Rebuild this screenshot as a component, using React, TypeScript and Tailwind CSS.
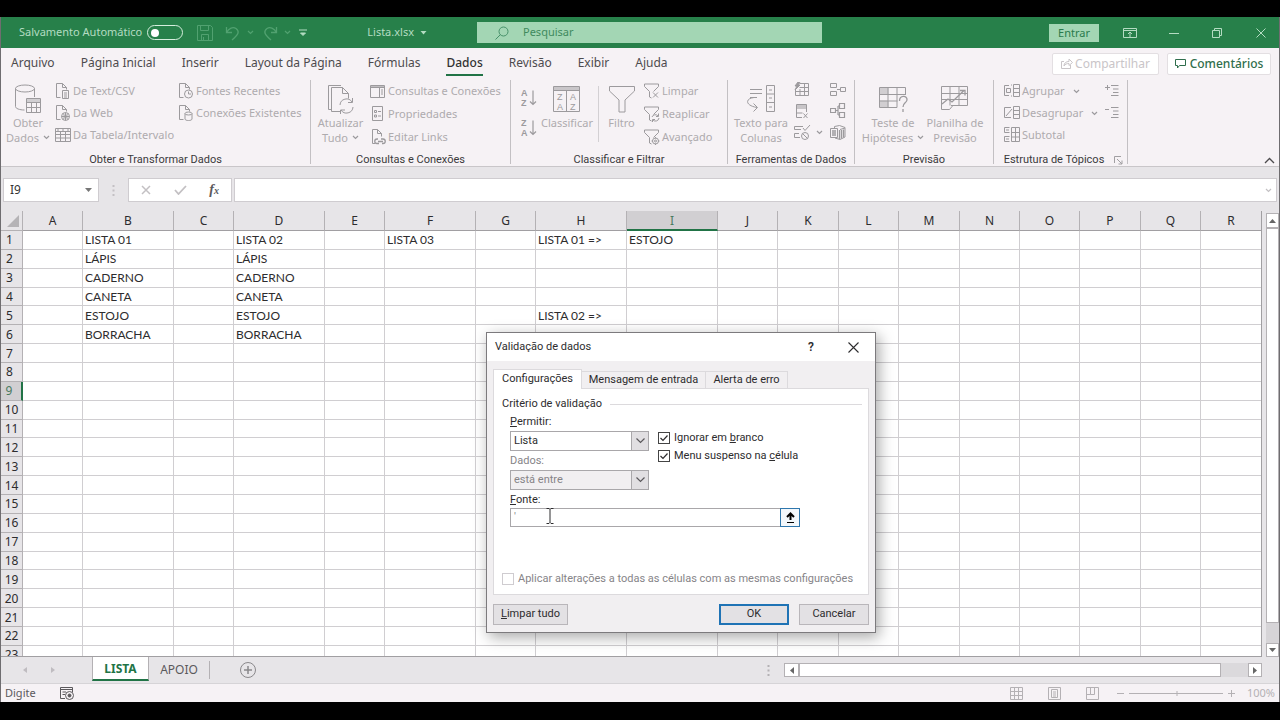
import { type ReactNode } from "react";

const COLS: [string, number][] = [
  ["A", 60], ["B", 91], ["C", 60], ["D", 91], ["E", 60], ["F", 91], ["G", 60], ["H", 91], ["I", 91],
  ["J", 60], ["K", 61], ["L", 60], ["M", 61], ["N", 60], ["O", 60], ["P", 61], ["Q", 60], ["R", 61],
];

const CELLS: Record<string, string> = {
  B1: "LISTA 01", B2: "LÁPIS", B3: "CADERNO", B4: "CANETA", B5: "ESTOJO", B6: "BORRACHA",
  D1: "LISTA 02", D2: "LÁPIS", D3: "CADERNO", D4: "CANETA", D5: "ESTOJO", D6: "BORRACHA",
  F1: "LISTA 03", H1: "LISTA 01 =>", I1: "ESTOJO", H5: "LISTA 02 =>",
};

const ROWS = Array.from({ length: 23 }, (_, i) => i + 1);
const MENU = ["Arquivo", "Página Inicial", "Inserir", "Layout da Página", "Fórmulas", "Dados", "Revisão", "Exibir", "Ajuda"];

function Ico({ w, h, children, className = "" }: { w: number; h: number; children: ReactNode; className?: string }) {
  return (
    <svg width={w} height={h} viewBox={`0 0 ${w} ${h}`} fill="none" stroke="currentColor" strokeWidth="1"
      className={"shrink-0 " + className} aria-hidden="true">{children}</svg>
  );
}

const Chev = ({ className = "" }: { className?: string }) => (
  <Ico w={7} h={5} className={className}><path d="M1 1l2.500 2.500L6 1" strokeWidth="1.200" /></Ico>
);

const Doc = ({ children }: { children?: ReactNode }) => (
  <Ico w={16} h={16}><path d="M5.500 14.500h-4V.5h6l4 4v2M7.500.5v4h4" />{children}</Ico>
);

const Funnel = ({ children }: { children?: ReactNode }) => (
  <Ico w={16} h={16}><path d="M.5 1h14v2.500l-5 5M.5 1v2.500l5 5V14l2 1" />{children}</Ico>
);

function Big({ icon, lines, drop, className = "" }: { icon: ReactNode; lines: string[]; drop?: boolean; className?: string }) {
  return (
    <button className={"flex flex-col items-center pt-[3px] text-[11px] leading-[15px] shrink-0 whitespace-nowrap " + className}>
      <span className="h-8 flex items-center">{icon}</span>
      {lines.map((l, i) => (
        <span key={l} className="flex items-center gap-1">{l}{drop && i === lines.length - 1 && <Chev />}</span>
      ))}
    </button>
  );
}

function Small({ icon, label, drop }: { icon: ReactNode; label: string; drop?: boolean }) {
  return (
    <button className="flex items-center gap-0.5 h-[22px] text-[11px] whitespace-nowrap">
      {icon}{label}{drop && <Chev className="ml-1.5" />}
    </button>
  );
}

function Group({ title, children, className = "", launcher }: { title: string; children: ReactNode; className?: string; launcher?: boolean }) {
  return (
    <section className={"flex flex-col justify-between border-r border-[#c3c0c3] shrink-0 " + className}>
      <div className="flex text-[#aeabae] [&_svg]:text-[#9c9a9d]">{children}</div>
      <div className="flex h-4 -mb-1 items-center font-[Roboto,sans-serif] text-[11px] text-[#3b3a3c] whitespace-nowrap">
        <h2 className="flex-1 text-center">{title}</h2>
        {launcher && (
          <button aria-label="Mais opções" className="mr-1 text-[#a19fa2]">
            <Ico w={9} h={9}><path d="M.5 7V.5H7M3 3l5 5M8 4.500V8H4.500" /></Ico>
          </button>
        )}
      </div>
    </section>
  );
}

const sortIco = (a: string, b: string) => (
  <Ico w={16} h={20}>
    <g fontSize="9" fontFamily="Liberation Sans" fontWeight="700" fill="currentColor" stroke="none">
      <text x="0" y="8">{a}</text><text x="0" y="18">{b}</text>
    </g>
    <path d="M12 2.500v14M9 13.500l3 3 3-3" strokeWidth="1.200" />
  </Ico>
);

function TitleBar() {
  return (
    <header className="flex items-center h-[31px] shrink-0 bg-[#27804a] text-[#b4dcc2] text-[11px]">
      <div className="flex items-center w-[476px] shrink-0 pl-[18px]">
        <span id="autosave">Salvamento Automático</span>
        <button role="switch" aria-checked="false" aria-labelledby="autosave"
          className="ml-[5px] w-9 h-[15px] rounded-full border border-[#d5eedd] flex items-center pl-[3px]">
          <span className="w-2 h-2 rounded-full bg-white" />
        </button>
        <div className="flex items-center ml-3.5 text-[#51a170]">
          <button aria-label="Salvar">
            <Ico w={16} h={16}><path d="M.5.5h13l2 2v13H.5zM3.500.5v5h8v-5M4.500 15.500v-6h7v6M6.500 12v3.500" /></Ico>
          </button>
          <button aria-label="Desfazer" className="flex items-center gap-1.5 ml-3">
            <Ico w={16} h={16}><path d="M1.500 2v5.500H7M1.500 7.500C4 3 8 1.500 11 3.500c4 3 2.500 6-4 11.500" strokeWidth="1.300" /></Ico><Chev />
          </button>
          <button aria-label="Refazer" className="flex items-center gap-1.5 ml-2">
            <Ico w={16} h={16}><path d="M14.500 2v5.500H9M14.500 7.500C12 3 8 1.500 5 3.500c-4 3-2.500 6 4 11.500" strokeWidth="1.300" /></Ico><Chev />
          </button>
          <button aria-label="Personalizar" className="ml-2 text-[#b4dcc2]">
            <Ico w={8} h={8}><path d="M0 1h8" /><path d="M1.500 4h5L4 6.500z" fill="currentColor" /></Ico>
          </button>
        </div>
        <button className="flex items-center gap-1.5 ml-auto mr-[50px]">
          Lista.xlsx
          <Ico w={7} h={4}><path d="M.5 0h6l-3 3.500z" fill="currentColor" stroke="none" /></Ico>
        </button>
      </div>
      <label className="flex items-center w-[345px] h-[21px] bg-[#a3d6b4] text-[#47916a] pl-[18px] gap-[14px]">
        <Ico w={14} h={14}><circle cx="8.500" cy="5.500" r="4.500" /><path d="M5.500 8.500L.5 13.500" /></Ico>
        <input aria-label="Pesquisar" placeholder="Pesquisar"
          className="flex-1 min-w-0 bg-transparent outline-none placeholder:text-[#3f8a5e]" />
      </label>
      <div className="flex items-center ml-auto mr-[13px]">
        <button className="w-[50px] h-[18px] bg-[#a3d6b4] text-[#2a7a4c] leading-[18px]">Entrar</button>
        <button aria-label="Opções da faixa" className="ml-6">
          <Ico w={14} h={10}><path d="M.5.5h13v9H.5zM.5 2.500h13M7 9V4.500M5 6l2-2 2 2" /></Ico>
        </button>
        <button aria-label="Minimizar" className="ml-8"><Ico w={10} h={10}><path d="M0 5.500h10" /></Ico></button>
        <button aria-label="Restaurar" className="ml-[33px]">
          <Ico w={11} h={10}><path d="M.5 2.500h7v7h-7zM2.500 2V.5h7v7H8" /></Ico>
        </button>
        <button aria-label="Fechar" className="ml-[33px]"><Ico w={10} h={10}><path d="M.5.5l9 9M9.500.5l-9 9" /></Ico></button>
      </div>
    </header>
  );
}

function Menu() {
  return (
    <nav className="flex items-center h-[31px] shrink-0 bg-[#f6f2f5] pl-2.5 text-[12px] text-[#4d4b4e]">
      <div className="flex gap-[26px]">
        {MENU.map((m) => (
          <button key={m} className={"h-[24px] leading-[20px] whitespace-nowrap border-b-2 " +
            (m === "Dados" ? "border-[#217346] font-medium text-[#333]" : "border-transparent")}>{m}</button>
        ))}
      </div>
      <div className="flex gap-2 ml-auto mr-2 text-[12px]">
        <button disabled className="flex items-center justify-center gap-0.5 w-[107px] h-[22px] bg-white border border-[#e3dfe2] rounded-xs text-[#c9c5c8]">
          <Ico w={12} h={11}><path d="M3 3.500H.5v7h9V7M3 8c0-3 2-4.500 5-4.500V1l3.500 3.500L8 7.500V5.500C6 5.500 4 6 3 8z" /></Ico>
          Compartilhar
        </button>
        <button className="flex items-center justify-center gap-1 w-[104px] h-[22px] bg-white border border-[#e3dfe2] rounded-xs text-[#2f6e4c] font-medium">
          <Ico w={11} h={10}><path d="M.5.5h10v6h-6L2.500 9V6.500h-2z" /></Ico>
          Comentários
        </button>
      </div>
    </nav>
  );
}

function Ribbon() {
  return (
    <div className="flex h-[88px] shrink-0 bg-[#f6f2f5] border-b border-[#c9c6c9] pt-px pb-0.5">
      <Group title="Obter e Transformar Dados" className="w-[310px]">
        <Big className="w-[54px]" drop lines={["Obter", "Dados"]} icon={
          <Ico w={28} h={31}>
            <ellipse cx="11" cy="4.500" rx="9.500" ry="3.500" />
            <path d="M1.500 4.500v18c0 2 4 3.500 9 3.500M20.500 4.500V13" />
            <path d="M12.500 14.500h14v14h-14zM12.500 18.500h14M12.500 23.500h14M17.500 18v10.500M22.500 18v10.500" />
            <path d="M12.500 16.500h14" opacity=".4" strokeWidth="3" />
          </Ico>} />
        <div className="w-[123px]">
          <Small label="De Text/CSV" icon={<Doc><path d="M7.500 7.500h6v8h-6zM9 10h3M9 12h3M9 14h3" /></Doc>} />
          <Small label="Da Web" icon={<Doc><circle cx="10.500" cy="11.500" r="4" /><path d="M6.500 11.500h8M10.500 7.500v8M8.500 8.500c1 2 1 4 0 6M12.500 8.500c-1 2-1 4 0 6" /></Doc>} />
          <Small label="Da Tabela/Intervalo" icon={<Ico w={16} h={16}><path d="M.5 1.500h15v13H.5zM.5 4.500h15M.5 7.500h15M.5 11h15M5.500 4.500v10M10.500 4.500v10" /><path d="M2 3h2M7 3h2M12 3h2" /></Ico>} />
        </div>
        <div>
          <Small label="Fontes Recentes" icon={<Doc><circle cx="10.500" cy="11" r="4" /><path d="M10.500 8.500V11h2.500" /></Doc>} />
          <Small label="Conexões Existentes" icon={<Doc><ellipse cx="10.500" cy="8.500" rx="3.500" ry="1.500" /><path d="M7 8.500v5.500c0 2 7 2 7 0V8.500" /></Doc>} />
        </div>
      </Group>

      <Group title="Consultas e Conexões" className="w-[200px]">
        <Big className="w-[59px]" drop lines={["Atualizar", "Tudo"]} icon={
          <Ico w={28} h={30}>
            <path d="M4 25.500H1.500V1.500H14M13 27.500H4.500v-24h11l6 6v5M15.500 3.500v6h6" />
            <path d="M13 21a6.500 6.500 0 0 1 12-3M26 23a6.500 6.500 0 0 1-12 3M25.500 14v4.500H21M13.500 30v-4H18" />
          </Ico>} />
        <div className="flex flex-col gap-px">
          <Small label="Consultas e Conexões" icon={<Ico w={16} h={14}><path d="M.5 1.500h14v12H.5zM.5 3.500h14M9.500 4v9.500M11 6h2M11 8h2M11 10h2" /><path d="M.5 2.500h14" opacity=".6" /></Ico>} />
          <Small label="Propriedades" icon={<Ico w={16} h={16}><path d="M2.500.5h10v14h-10zM8 5.500h3M8 10h3M4.500 4.500h2v2h-2zM4.500 9h2v2h-2z" /></Ico>} />
          <Small label="Editar Links" icon={<Ico w={16} h={16}><path d="M5 14.500H2.500V.5h5l4 4v3M7.500.5v4h4" /><path d="M8 10H7a2 2 0 0 0 0 4.500h2M11 10h2a2 2 0 0 1 0 4.500h-1M8 12.500h5" strokeWidth="1.300" /></Ico>} />
        </div>
      </Group>

      <Group title="Classificar e Filtrar" className="w-[217px]">
        <div className="flex flex-col gap-2.5 pt-2 pl-[10px] w-[28px]">
          <button aria-label="Classificar de A a Z">{sortIco("A", "Z")}</button>
          <button aria-label="Classificar de Z a A">{sortIco("Z", "A")}</button>
        </div>
        <Big className="w-[56px]" lines={["Classificar"]} icon={
          <Ico w={28} h={28}>
            <path d="M.5 1.500h26v25H.5zM.5 5.500h26M13.500 5.500v21" />
            <path d="M.5 3.500h26" strokeWidth="3" opacity=".5" />
            <g fontSize="9" fontFamily="Liberation Sans" fill="currentColor" stroke="none">
              <text x="4" y="15">Z</text><text x="4" y="25">A</text><text x="17" y="15">A</text><text x="17" y="25">Z</text>
            </g>
          </Ico>} />
        <div className="w-px h-14 mt-1.5 ml-[3px] bg-[#d3d0d3]" />
        <Big className="w-[45px]" lines={["Filtro"]} icon={
          <Ico w={26} h={28}><path d="M.5 1.500h25V6l-9.500 9v12h-6V15L.5 6z" /></Ico>} />
        <div className="flex flex-col gap-px">
          <Small label="Limpar" icon={<Funnel><path d="M9 9.500l5 5M14 9.500l-5 5" /></Funnel>} />
          <Small label="Reaplicar" icon={<Funnel><path d="M8 11a3.500 3.500 0 0 1 6-1M15 12a3.500 3.500 0 0 1-6 2M14.500 7.500v3H12M8.500 16v-2.500H11" /></Funnel>} />
          <Small label="Avançado" icon={<Funnel><circle cx="11.500" cy="12" r="3" /><circle cx="11.500" cy="12" r="1" /><path d="M11.500 8v1.500M11.500 14.500V16M7.500 12H9M14 12h1.500" /></Funnel>} />
        </div>
      </Group>

      <Group title="Ferramentas de Dados" className="w-[127px]">
        <Big className="w-[66px]" lines={["Texto para", "Colunas"]} icon={
          <Ico w={30} h={30}>
            <path d="M4 5.500h12M4 9.500h12M4 13.500h7M8 13.500c-9 1-9 8 3 10M7.500 19.500l4 4-4 4" />
            <path d="M20.500 1.500h8v26h-8zM20.500 10h8M20.500 18.500h8M23 6h3M23 14h3M23 23h3" />
          </Ico>} />
        <div className="flex flex-col gap-1.5 pt-0.5 w-9">
          <button aria-label="Preenchimento Relâmpago"><Ico w={16} h={15}><path d="M5.500 1.500h9v12h-13V7M1.500 9.500h13M5.500 5.500h9M6 7v6.500M10.500 1.500v12" /><path d="M4 0L1 4h2L1 8l5-5H4l2-3" fill="currentColor" /></Ico></button>
          <button aria-label="Remover Duplicatas"><Ico w={16} h={16}><path d="M8 14.500H2.500V1.500h10V9M2.500 10h6" /><path d="M3 2h9v3.500H3z" fill="currentColor" opacity=".5" /><path d="M9.500 10.500l4 4.500M13.500 10.500l-4 4.500" /></Ico></button>
          <button aria-label="Validação de Dados" className="flex items-center gap-1"><Ico w={18} h={15}><path d="M7 4.500H.5v-3H9M6 12.500H.5v-4H5M9 3l2 2.500L16 0" /><circle cx="11" cy="11" r="3.500" /><path d="M8.500 8.500l5 5" /></Ico><Chev /></button>
        </div>
        <div className="flex flex-col gap-1.5 pt-0.5">
          <button aria-label="Consolidar"><Ico w={16} h={15}><path d="M.5 1.500h6v4h-6zM.5 9.500h6v4h-6zM10.500 5.500h5v4h-5zM7 7.500h3" /></Ico></button>
          <button aria-label="Relações"><Ico w={16} h={16}><path d="M.5 5.500h5v4h-5zM9.500.500h5v5h-5zM9.500 9.500h5v5h-5zM5.500 7.500H8M8 3v9M8 3h1.500M8 12h1.500" strokeWidth="1.200" /></Ico></button>
          <button aria-label="Modelo de Dados">
            <Ico w={16} h={15}>
              <path d="M4.500 3v-1.500l5-1 5.500 2v9.500l-5 2.500-5-1.500M15 3l-5 1.500" />
              <path d="M.5 3.500h7v9h-7z" />
              <path d="M2 6h4M2 8h4M2 10h4M9.500 5v9M11.500 5v8.500M13.500 4.500v8" strokeWidth="1.300" />
            </Ico>
          </button>
        </div>
      </Group>

      <Group title="Previsão" className="w-[139px]">
        <Big className="w-[76px]" drop lines={["Teste de", "Hipóteses"]} icon={
          <Ico w={29} h={28}>
            <path d="M18 22.500H.5v-20h26V10M.5 9.500h26M.5 16h18M9 2.500v20M18 2.500v20" />
            <path d="M1 3h8v6.500H1zM1 16h8v6.500H1z" fill="currentColor" opacity=".4" />
            <path d="M20.500 16c0-6 8-6 7.500-1-.5 3-4 3-4 7M24 24v3" strokeWidth="1.300" />
          </Ico>} />
        <Big className="w-[56px] -ml-1" lines={["Planilha de", "Previsão"]} icon={
          <Ico w={28} h={26}>
            <path d="M10 19.500h16.500V.5H.5v23h8l3-3.500M.5 7.500h26M.5 13.500h26M9 .5v19M18 .5v19" />
            <path d="M1 18l6-5 4 3L23 4.500M19 4.500h5v5" strokeWidth="1.300" />
          </Ico>} />
      </Group>

      <Group title="Estrutura de Tópicos" className="w-[134px]" launcher>
        <div className="pl-2.5 w-[111px]">
          <Small drop label="Agrupar" icon={<Ico w={16} h={14}><path d="M5 1.500H.5v10H5M9.500.5h6v12h-6zM9.500 4.500h6M9.500 8.500h6M2.500 4.500h4v4h-4zM7 1h1M7 12h1" /></Ico>} />
          <Small drop label="Desagrupar" icon={<Ico w={16} h={14}><path d="M7 1.500H.5v10H7M9.500.5h6v12h-6zM9.500 4.500h6M9.500 8.500h6M2 10l6-7" /></Ico>} />
          <Small label="Subtotal" icon={<Ico w={16} h={16}><path d="M5.500.5h-5v5h5M5.500 9.500h-5v5h5M2 3h3M2 12h3M7.500.5h8v14h-8zM7.500 5.500h8M7.500 10h8M11.500.5v14" /></Ico>} />
        </div>
        <div className="pt-1 flex flex-col gap-2.5">
          <button aria-label="Mostrar Detalhe"><Ico w={14} h={12}><path d="M0 3.500h5M2.500 1v5M6 1.500h7.500M8 5h5.500M8 8.500h5.500M6 11.500h7.500" /></Ico></button>
          <button aria-label="Ocultar Detalhe"><Ico w={14} h={12}><path d="M0 3.500h4M6 1.500h7.500M8 5h5.500M8 8.500h5.500M6 11.500h7.500" /></Ico></button>
        </div>
      </Group>
      <button aria-label="Recolher a faixa" className="ml-auto self-end mr-1 text-[#4d4b4e]">
        <Ico w={11} h={7}><path d="M1 6l4.500-4.500L10 6" strokeWidth="1.300" /></Ico>
      </button>
    </div>
  );
}

function FormulaBar() {
  return (
    <div className="flex items-center h-11 shrink-0 bg-[#e7e5e8] pt-0.5 px-0.5 text-[#c3c0c3]">
      <label className="flex items-center w-24 h-6 bg-white border border-[#cfccd0] pr-1.5">
        <input aria-label="Caixa de nome" defaultValue="I9" className="w-full min-w-0 pl-1.5 text-[12px] text-[#333] outline-none" />
        <Ico w={7} h={4}><path d="M0 0h7L3.500 4z" fill="#777" stroke="none" /></Ico>
      </label>
      <Ico w={3} h={11} className="mx-[13px]"><path d="M1.500 0v2M1.500 4.500v2M1.500 9v2" strokeWidth="2" /></Ico>
      <div className="flex items-center justify-between w-[104px] h-6 bg-white border border-[#cfccd0] px-3">
        <button aria-label="Cancelar entrada"><Ico w={10} h={10}><path d="M1 1l8 8M9 1L1 9" strokeWidth="1.500" /></Ico></button>
        <button aria-label="Confirmar entrada"><Ico w={13} h={10}><path d="M1 5l3.500 4L12 1" strokeWidth="1.800" /></Ico></button>
        <button aria-label="Inserir função" className="font-['Liberation_Serif'] italic font-bold text-[14px] leading-4 text-[#5b595c]">f<sub className="text-[10px] bottom-0">x</sub></button>
      </div>
      <label className="flex items-center flex-1 h-6 ml-0.5 bg-white border border-[#cfccd0] pr-1">
        <input aria-label="Barra de fórmulas" className="flex-1 min-w-0 outline-none" />
        <Chev />
      </label>
    </div>
  );
}

function Sheet() {
  return (
    <div className="flex flex-1 min-h-0 bg-[#e7e5e8]">
      <div className="flex-1 min-w-0 overflow-hidden border-r border-b border-[#a19fa2]">
        <table className="table-fixed w-full h-[454px] border-separate border-spacing-0 text-[12px] leading-[17px] text-[#2d2c2e]">
          <colgroup>
            <col style={{ width: 22 }} />
            {COLS.map(([c, w]) => <col key={c} style={{ width: w }} />)}
          </colgroup>
          <thead>
            <tr className="h-5 bg-[#e7e5e8]">
              <th className="p-0 border-r border-b border-[#b4b1b4]">
                <Ico w={12} h={12} className="ml-1.5"><path d="M12 0v12H0z" fill="#b5b3b6" stroke="none" /></Ico>
              </th>
              {COLS.map(([c]) => (
                <th key={c} className={"p-0 font-normal border-r border-[#b4b1b4] " +
                  (c === "I" ? "bg-[#d1cfd2] border-b-2 border-b-[#217346] text-[#4a7a60]" : "border-b border-b-[#a19fa2]")}>{c}</th>
              ))}
            </tr>
          </thead>
          <tbody>
            {ROWS.map((r) => (
              <tr key={r}>
                <th className={"p-0 font-normal border-b border-[#b4b1b4] " +
                  (r === 9 ? "bg-[#d1cfd2] border-r-2 border-r-[#217346] text-[#4a7a60]" : "bg-[#e7e5e8] border-r") +
                  (r < 10 ? " pr-1" : "")}>{r}</th>
                {COLS.map(([c]) => (
                  <td key={c} className="p-0 pl-0.5 border-r border-b border-[#d0ced1] bg-white whitespace-nowrap font-[Lato,sans-serif]">
                    {CELLS[c + r]}
                  </td>
                ))}
              </tr>
            ))}
          </tbody>
        </table>
      </div>
      <div className="flex flex-col w-[13px] ml-1 mt-0.5 bg-[#d6d4d7] text-[#666]">
        <button aria-label="Rolar para cima" className="h-[15px] bg-white border border-[#b4b1b4] flex items-center justify-center">
          <Ico w={7} h={4}><path d="M0 4h7L3.500 0z" fill="currentColor" stroke="none" /></Ico>
        </button>
        <div className="flex-1 bg-white border border-[#b4b1b4]" />
        <button aria-label="Rolar para baixo" className="mt-5 h-[14px] bg-white border border-[#b4b1b4] flex items-center justify-center">
          <Ico w={7} h={4}><path d="M0 0h7L3.500 4z" fill="currentColor" stroke="none" /></Ico>
        </button>
      </div>
    </div>
  );
}

function SheetTabs() {
  return (
    <div className="flex h-[26px] shrink-0 bg-[#e7e5e8] text-[12px] text-[#5b595c]">
      <div className="flex items-center gap-[22px] w-[91px] pl-[22px] text-[#bfbcc0]">
        <button aria-label="Planilha anterior"><Ico w={5} h={6}><path d="M4 0v6L0 3z" fill="currentColor" stroke="none" /></Ico></button>
        <button aria-label="Próxima planilha"><Ico w={5} h={6}><path d="M1 0v6l4-3z" fill="currentColor" stroke="none" /></Ico></button>
      </div>
      <button className="w-[57px] h-6 pt-0.5 bg-white border-x border-x-[#b4b1b4] border-b-2 border-b-[#217346] font-bold text-[#217346]">LISTA</button>
      <button className="w-[60px] h-6 pt-px">APOIO</button>
      <div className="w-px h-[18px] mt-1 bg-[#b4b1b4]" />
      <button aria-label="Nova planilha" className="ml-[30px] text-[#8a888b]">
        <Ico w={16} h={16}><circle cx="8" cy="8" r="7.500" /><path d="M4 8h8M8 4v8" strokeWidth="1.500" /></Ico>
      </button>
      <div className="flex items-center ml-auto mr-[17px] text-[#666]">
        <Ico w={3} h={11} className="mr-3.5 text-[#b4b1b4]"><path d="M1.500 0v2M1.500 4.500v2M1.500 9v2" strokeWidth="2" /></Ico>
        <button aria-label="Rolar para a esquerda" className="w-[15px] h-[14px] bg-white border border-[#b4b1b4] flex items-center justify-center">
          <Ico w={4} h={7}><path d="M4 0v7L0 3.500z" fill="currentColor" stroke="none" /></Ico>
        </button>
        <div className="flex w-[449px] h-[14px] bg-[#dbd9dc]"><div className="w-[422px] bg-white border border-[#b4b1b4]" /></div>
        <button aria-label="Rolar para a direita" className="w-[14px] h-[14px] bg-white border border-[#b4b1b4] flex items-center justify-center">
          <Ico w={4} h={7}><path d="M0 0v7l4-3.500z" fill="currentColor" stroke="none" /></Ico>
        </button>
      </div>
    </div>
  );
}

function StatusBar() {
  return (
    <footer className="flex items-center h-[19px] shrink-0 bg-[#f6f2f5] border-t border-[#d6d4d7] pl-1 pr-1 text-[11px] text-[#5b595c]">
      Digite
      <Ico w={14} h={13} className="ml-6"><path d="M5 11.500H.5v-11h12V5M.5 2.500h12M2.500 5H6M2.500 7.500H5" /><circle cx="9.500" cy="8.500" r="4" /><circle cx="9.500" cy="8.500" r="1.500" fill="currentColor" /></Ico>
      <div className="flex items-center ml-auto text-[#b4b1b4]">
        <button aria-label="Normal"><Ico w={13} h={13}><path d="M.5.5h12v12H.5zM.5 4.500h12M.5 8.500h12M4.500.5v12M8.500.5v12" /></Ico></button>
        <button aria-label="Layout da Página" className="ml-[25px]"><Ico w={13} h={13}><path d="M.5.5h12v12H.5zM3.500 2.500h6v8h-6zM5 5h3M5 7h3M5 9h3" /></Ico></button>
        <button aria-label="Quebra de Página" className="ml-[25px]"><Ico w={13} h={13}><path d="M.5.5h12v12H.5zM4.500.5v7h4v-7M.5 7.500h4" /></Ico></button>
        <Ico w={118} h={11} className="ml-[18px]"><path d="M0 5.500h7M12 5.500h94M60 3v5M111 5.500h7M114.500 2v7" /></Ico>
        <span className="ml-3">100%</span>
      </div>
    </footer>
  );
}

function Combo({ id, value, disabled }: { id: string; value: string; disabled?: boolean }) {
  return (
    <div className={"relative w-[139px] h-5 border border-[#a9a7aa] " + (disabled ? "bg-[#f1eff1] text-[#868488]" : "bg-white")}>
      <select id={id} disabled={disabled} className="appearance-none w-full h-full pl-[3px] pr-5 leading-[18px] outline-none">
        <option>{value}</option>
      </select>
      <span className="absolute right-0 top-0 w-[17px] h-[18px] bg-[#e1dfe2] border-l border-[#a9a7aa] flex items-center justify-center pointer-events-none text-[#5b595c]">
        <Ico w={9} h={6}><path d="M.5.5l4 4 4-4" strokeWidth="1.200" /></Ico>
      </span>
    </div>
  );
}

function Check({ children, checked, disabled }: { children: ReactNode; checked?: boolean; disabled?: boolean }) {
  return (
    <label className={"flex items-center gap-1 h-[18px] whitespace-nowrap " + (disabled ? "text-[#868488]" : "")}>
      <span className="relative w-3 h-3 shrink-0">
        <input type="checkbox" defaultChecked={checked} disabled={disabled}
          className={"block appearance-none w-3 h-3 bg-white border " + (disabled ? "border-[#cfccd0]" : "border-[#444]")} />
        {checked && <Ico w={12} h={12} className="absolute left-0 top-0 pointer-events-none"><path d="M2.500 6L5 8.500l4.500-5" strokeWidth="1.200" /></Ico>}
      </span>
      <span>{children}</span>
    </label>
  );
}

function ValidationDialog() {
  return (
    <div role="dialog" aria-labelledby="dlg-title"
      className="absolute left-[486px] top-[332px] w-[390px] bg-[#f1eff1] border border-[#7c7a7d] shadow-[3px_4px_14px_rgba(0,0,0,0.35)] font-[Roboto,sans-serif] text-[11px] text-[#2d2c2e]">
      <div className="flex items-center h-7 bg-white pl-2 pr-4">
        <h1 id="dlg-title">Validação de dados</h1>
        <button aria-label="Ajuda" className="ml-auto text-[12px] font-semibold">?</button>
        <button aria-label="Fechar" className="ml-[34px]"><Ico w={11} h={11}><path d="M.5.5l10 10M10.500.5l-10 10" strokeWidth="1.100" /></Ico></button>
      </div>
      <div className="px-1.5 pt-2 pb-[7px]">
        <div role="tablist" className="flex items-end">
          <button role="tab" aria-selected="true" className="w-[89px] h-5 -mb-px relative bg-white border border-b-0 border-[#dcdadd]">Configurações</button>
          <button role="tab" className="w-[124px] h-[17px] border border-b-0 border-l-0 border-[#dcdadd]">Mensagem de entrada</button>
          <button role="tab" className="w-[82px] h-[17px] border border-b-0 border-l-0 border-[#dcdadd]">Alerta de erro</button>
        </div>
        <div className="bg-white border border-[#dcdadd] pl-2 pr-1.5 pt-[7px] pb-1.5">
          <div className="flex items-center gap-2 h-4">Critério de validação<span className="flex-1 h-px bg-[#dcdadd]" /></div>
          <div className="flex gap-[9px] pl-2">
            <div>
              <label htmlFor="allow" className="block h-[19px] leading-[20px]"><u>P</u>ermitir:</label>
              <Combo id="allow" value="Lista" />
              <label htmlFor="data" className="block h-[19px] leading-[20px] text-[#868488]">Dados:</label>
              <Combo id="data" value="está entre" disabled />
            </div>
            <div className="pt-[17px]">
              <Check checked>Ignorar em <u>b</u>ranco</Check>
              <Check checked>Menu suspenso na <u>c</u>élula</Check>
            </div>
          </div>
          <div className="pl-2">
            <label htmlFor="source" className="block h-[18px] leading-[20px]"><u>F</u>onte:</label>
            <div className="relative flex w-[290px] h-[19px]">
              <input id="source" defaultValue="'" className="flex-1 min-w-0 pl-[3px] border border-r-0 border-[#a9a7aa] text-[#868488] outline-none" />
              <button aria-label="Recolher caixa" className="w-5 border border-[#2f77ad] bg-[#f3f8fc] flex items-center justify-center text-black">
                <Ico w={9} h={11}><path d="M4.500 8V2M1 5l3.500-3.500L8 5" strokeWidth="2" /><path d="M1 10.500h7" /></Ico>
              </button>
              <Ico w={8} h={16} className="absolute left-[36px] top-0"><path d="M.5.5h2.500l1 1 1-1h2.500M4 1.500v13M.5 15.500h2.500l1-1 1 1h2.500" /></Ico>
            </div>
          </div>
          <div className="mt-[43px]">
            <Check disabled>Aplicar alterações a todas as células com as mesmas configurações</Check>
          </div>
        </div>
        <div className="flex gap-2.5 mt-[9px]">
          <button className="w-[75px] h-[21px] bg-[#e3e1e4] border border-[#b9b6ba] mr-auto"><u>L</u>impar tudo</button>
          <button className="w-[70px] h-[21px] bg-[#e3e1e4] border-2 border-[#1f73b5]">OK</button>
          <button className="w-[70px] h-[21px] bg-[#e3e1e4] border border-[#b9b6ba]">Cancelar</button>
        </div>
      </div>
    </div>
  );
}

export default function App() {
  return (
    <div className="h-screen bg-black pt-[17px] pb-[18px] font-['Noto_Sans','Open_Sans',sans-serif]">
      <div className="flex flex-col h-full border-x border-[#6f6d70] overflow-hidden">
        <TitleBar />
        <Menu />
        <Ribbon />
        <FormulaBar />
        <Sheet />
        <SheetTabs />
        <StatusBar />
      </div>
      <ValidationDialog />
    </div>
  );
}
